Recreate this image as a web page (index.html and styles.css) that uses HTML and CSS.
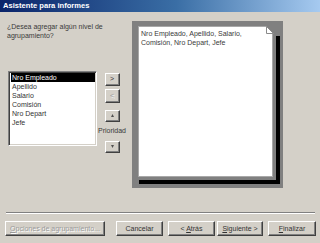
FILE: index.html
```html
<!DOCTYPE html>
<html lang="es">
<head>
<meta charset="utf-8">
<title>Asistente para informes</title>
<link rel="stylesheet" href="styles.css">
</head>
<body>
<div class="window">
  <div class="titlebar">Asistente para informes</div>
  <div class="main">
    <div class="left">
      <p class="question">¿Desea agregar algún nivel de<br>agrupamiento?</p>
      <div class="picker">
        <ul class="listbox">
          <li class="selected">Nro Empleado</li>
          <li>Apellido</li>
          <li>Salario</li>
          <li>Comisión</li>
          <li>Nro Depart</li>
          <li>Jefe</li>
        </ul>
        <div class="movecol">
          <button class="btn small b-add">&gt;</button>
          <button class="btn small b-remove disabled">&lt;</button>
          <button class="btn small b-up"><svg width="3" height="3" viewBox="0 0 3 3"><polygon points="1.5,0 3,3 0,3" fill="#505050"/></svg></button>
          <span class="prio">Prioridad</span>
          <button class="btn small b-down"><svg width="3" height="3" viewBox="0 0 3 3"><polygon points="0,0 3,0 1.5,3" fill="#505050"/></svg></button>
        </div>
      </div>
    </div>
    <div class="preview">
      <div class="sheet">
        <p class="sheet-text">Nro Empleado, Apellido, Salario,<br>Comisión, Nro Depart, Jefe</p>
        <svg class="fold" width="15" height="13" viewBox="0 0 15 13">
          <rect x="11" y="0" width="4" height="13" fill="#808080"/>
          <polygon points="1,3 9,3 9,11" fill="#808080"/>
          <polygon points="1.5,3.5 8.5,10.5 1.5,10.5" fill="#ffffff" stroke="#8a8a8a" stroke-width="1"/>
        </svg>
      </div>
    </div>
  </div>
  <div class="sep"></div>
  <div class="buttons">
    <button class="btn wide disabled b-opts"><u>O</u>pciones de agrupamiento...</button>
    <button class="btn b-cancel">Cancelar</button>
    <button class="btn b-back">&lt; <u>A</u>trás</button>
    <button class="btn b-next"><u>S</u>iguiente &gt;</button>
    <button class="btn b-finish"><u>F</u>inalizar</button>
  </div>
</div>
</body>
</html>
```

FILE: styles.css
```css
* { box-sizing: border-box; }
html, body { margin: 0; padding: 0; }
body {
  font-family: "Liberation Sans", Arial, sans-serif;
  font-size: 7px;
  color: #333;
  background: #d4d0c8;
}
.window {
  width: 320px;
  height: 243px;
  background: #d4d0c8;
  display: flex;
  flex-direction: column;
  overflow: hidden;
}
.titlebar {
  flex: none;
  height: 12px;
  line-height: 12px;
  padding-left: 3px;
  font-weight: bold;
  font-size: 7.6px;
  color: #fff;
  background: linear-gradient(to right, #0a246a 0%, #3a6ea5 55%, #a6caf0 100%);
}
.main {
  flex: none;
  height: 200px;
  padding-top: 9px;
  display: grid;
  grid-template-columns: 132px 151px;
  align-items: start;
}
.left {
  padding-left: 7px;
}
.question {
  margin: 0;
  padding-top: 0.5px;
  line-height: 9px;
  color: #3a3a3a;
}
.picker {
  display: flex;
  margin-top: 31px;
  margin-left: 1px;
}
.listbox {
  list-style: none;
  margin: 0;
  width: 89px;
  height: 75px;
  background: #fff;
  border: 1px solid;
  border-color: #808080 #ffffff #ffffff #808080;
  box-shadow: inset 1px 1px 0 #404040, inset -1px -1px 0 #d4d0c8;
  padding: 1px 1px 0 2px;
}
.listbox li {
  line-height: 9.1px;
  height: 9.1px;
  padding-left: 1px;
  color: #333;
  white-space: nowrap;
}
.listbox li.selected {
  background: #000;
  color: #fff;
}
.movecol {
  width: 30px;
  display: flex;
  flex-direction: column;
  align-items: center;
  padding-top: 2px;
}
.btn {
  display: block;
  font-family: "Liberation Sans", Arial, sans-serif;
  font-size: 7px;
  color: #333;
  background: #d4d0c8;
  border: 1px solid;
  border-color: #ffffff #404040 #404040 #ffffff;
  box-shadow: inset -1px -1px 0 #808080;
  padding: 0;
  margin: 0;
  text-align: center;
  white-space: nowrap;
}
.btn svg { display: block; margin: 0 auto; }
.btn u { text-decoration: underline; }
.btn.disabled {
  color: #9a9a9a;
  text-shadow: 1px 1px 0 #fff;
}
.small { width: 15px; }
.b-add { height: 13px; line-height: 10px; }
.b-remove { height: 14px; line-height: 11px; margin-top: 3px; }
.b-up { height: 12px; margin-top: 7px; }
.prio {
  margin-top: 4px;
  line-height: 9px;
  white-space: nowrap;
  color: #3a3a3a;
}
.b-down { height: 12px; margin-top: 6px; }
.preview {
  height: 167px;
  background: #808080;
  padding: 5px 0 0 6px;
}
.sheet {
  position: relative;
  width: 135px;
  height: 151px;
  background: #fff;
  border: 1px solid #a8a8a8;
  box-shadow: 0 0 0 3px #808080, 4px 4px 0 3px #000;
  padding: 2px 0 0 2px;
}
.sheet-text {
  margin: 0;
  line-height: 9px;
  color: #3a3a3a;
  white-space: nowrap;
}
.fold {
  position: absolute;
  top: -4px;
  right: -8px;
}
.sep {
  flex: none;
  margin: 0 5px 0 6px;
  height: 2px;
  border-top: 1px solid #808080;
  border-bottom: 1px solid #ffffff;
}
.buttons {
  flex: none;
  display: flex;
  margin-top: 7px;
  padding-left: 5px;
  height: 15px;
}
.buttons .btn { height: 15px; line-height: 12px; }
.b-opts { width: 100px; }
.b-cancel { width: 47px; margin-left: 11px; }
.b-back { width: 47px; margin-left: 5px; }
.b-next { width: 46px; margin-left: 2px; }
.b-finish { width: 48px; margin-left: 5px; }
```
